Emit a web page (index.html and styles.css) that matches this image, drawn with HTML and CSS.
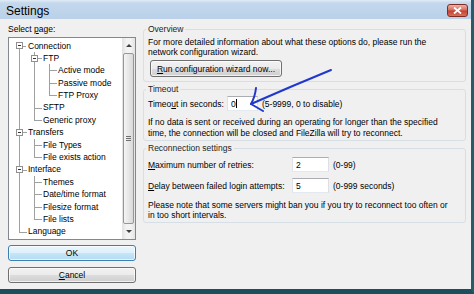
FILE: index.html
```html
<!DOCTYPE html>
<html lang="en">
<head>
    <meta charset="UTF-8">
    <title>Settings</title>
    <link rel="stylesheet" href="styles.css">
</head>
<body>
    <div class="window">
        <div class="titlebar">
            <span class="title">Settings</span>
            <span class="close">
                <svg width="9" height="7" viewBox="0 0 9 7"><path d="M1 0.5 L8 6.5 M8 0.5 L1 6.5" stroke="#fff" stroke-width="1.8"/></svg>
            </span>
        </div>

        <div class="content">
            <div class="sidebar">
                <div class="page-label">Select <u>p</u>age:</div>
                <div class="tree">
                    <ul class="tree-list">
                        <li><span class="exp"></span><div class="node">Connection</div>
                            <ul>
                                <li><span class="exp"></span><div class="node">FTP</div>
                                    <ul>
                                        <li><div class="node">Active mode</div></li>
                                        <li><div class="node">Passive mode</div></li>
                                        <li><div class="node">FTP Proxy</div></li>
                                    </ul>
                                </li>
                                <li><div class="node">SFTP</div></li>
                                <li><div class="node">Generic proxy</div></li>
                            </ul>
                        </li>
                        <li><span class="exp"></span><div class="node">Transfers</div>
                            <ul>
                                <li><div class="node">File Types</div></li>
                                <li><div class="node">File exists action</div></li>
                            </ul>
                        </li>
                        <li><span class="exp"></span><div class="node">Interface</div>
                            <ul>
                                <li><div class="node">Themes</div></li>
                                <li><div class="node">Date/time format</div></li>
                                <li><div class="node">Filesize format</div></li>
                                <li><div class="node">File lists</div></li>
                            </ul>
                        </li>
                        <li><div class="node">Language</div></li>
                    </ul>
                    <div class="scrollbar">
                        <div class="sb-btn up"></div>
                        <div class="sb-thumb"><span class="grip"></span></div>
                        <div class="sb-btn down"></div>
                    </div>
                </div>
                <button class="btn default ok">OK</button>
                <button class="btn cancel"><u>C</u>ancel</button>
            </div>

            <div class="panels">
                <fieldset class="group overview">
                    <legend>Overview</legend>
                    <p>For more detailed information about what these options do, please run the<br>network configuration wizard.</p>
                    <button class="btn wizard"><u>R</u>un configuration wizard now...</button>
                </fieldset>

                <fieldset class="group timeout">
                    <legend>Timeout</legend>
                    <div class="row">
                        <label class="timeout-label">Timeo<u>u</u>t in seconds:</label>
                        <span class="field-wrap">
                            <input class="field short" type="text" value="0">
                            <span class="caret"></span>
                        </span>
                        <span class="hint">(5-9999, 0 to disable)</span>
                    </div>
                    <p>If no data is sent or received during an operating for longer than the specified<br>time, the connection will be closed and FileZilla will try to reconnect.</p>
                </fieldset>

                <fieldset class="group reconnect">
                    <legend>Reconnection settings</legend>
                    <div class="row">
                        <label class="wide-label"><u>M</u>aximum number of retries:</label>
                        <input class="field" type="text" value="2">
                        <span class="hint">(0-99)</span>
                    </div>
                    <div class="row second">
                        <label class="wide-label"><u>D</u>elay between failed login attempts:</label>
                        <input class="field" type="text" value="5">
                        <span class="hint">(0-999 seconds)</span>
                    </div>
                    <p>Please note that some servers might ban you if you try to reconnect too often or<br>in too short intervals.</p>
                </fieldset>
            </div>
        </div>

        <!-- hand drawn annotation -->
        <svg class="arrow" width="474" height="294" viewBox="0 0 474 294">
            <path d="M331 70 Q292 86 251 104" fill="none" stroke="#2038cc" stroke-width="2" stroke-linecap="round"/>
            <path d="M256 88 Q255 97 251 104 L263 111" fill="none" stroke="#2038cc" stroke-width="2" stroke-linecap="round" stroke-linejoin="round"/>
        </svg>
    </div>
</body>
</html>
```

FILE: styles.css
```css
* {
    box-sizing: border-box;
}

body {
    margin: 0;
    font-family: "Liberation Sans", Arial, sans-serif;
    font-size: 8.5px;
    color: #000;
    background: #1b4f5b;
}

.window {
    position: relative;
    width: 474px;
    height: 294px;
    display: flex;
    flex-direction: column;
    background: #f0f0f0;
    border-right: 3px solid #255e6b;
    border-bottom: 5px solid #1b4f5b;
}

/* title bar */
.titlebar {
    flex: none;
    height: 19px;
    display: flex;
    align-items: center;
    justify-content: space-between;
    padding: 0 3px 0 6px;
    background: linear-gradient(#e2ecf7, #c4d8ed 3px, #b9d0e8);
}

.title {
    font-size: 12px;
    line-height: 1;
    padding-top: 2px;
}

.close {
    width: 21px;
    height: 13px;
    margin-top: 1px;
    display: flex;
    align-items: center;
    justify-content: center;
    border: 1px solid #7d2d24;
    border-radius: 3px;
    background: linear-gradient(#ecb3a6, #d66f5f 45%, #c4412f 55%, #d8705a);
}

.close svg {
    display: block;
}

/* main area */
.content {
    flex: 1;
    display: flex;
    gap: 7px;
    padding: 5px 5px 0 8px;
}

.sidebar {
    width: 128px;
    flex: none;
    display: flex;
    flex-direction: column;
}

.page-label {
    line-height: 11px;
}

.tree {
    margin-top: 2px;
    height: 203px;
    display: flex;
    background: #fff;
    border: 1px solid #828790;
}

.tree ul {
    list-style: none;
    margin: 0;
    padding: 0 0 0 6px;
}

.tree-list {
    flex: 1;
    overflow: hidden;
    padding: 1.5px 0 0 10px !important;
}

.tree li {
    position: relative;
    padding-left: 9px;
}

.tree li::before {
    content: "";
    position: absolute;
    left: 0;
    top: 0;
    width: 7px;
    height: 6.2px;
    border-left: 1px solid #a0a0a0;
    border-bottom: 1px solid #a0a0a0;
}

.tree li::after {
    content: "";
    position: absolute;
    left: 0;
    top: 6.2px;
    bottom: 0;
    border-left: 1px solid #a0a0a0;
}

.tree li:last-child::after {
    display: none;
}

.tree-list > li:first-child::before {
    border-left: 0;
}

.node {
    height: 12.4px;
    line-height: 12.4px;
    white-space: nowrap;
}

.exp {
    position: absolute;
    left: -3px;
    top: 2.7px;
    width: 7px;
    height: 7px;
    z-index: 1;
    background: #fff;
    border: 1px solid #909090;
}

.exp::after {
    content: "";
    position: absolute;
    left: 1px;
    top: 2px;
    width: 3px;
    height: 1px;
    background: #333;
}

.scrollbar {
    width: 13px;
    flex: none;
    display: flex;
    flex-direction: column;
    background: linear-gradient(to right, #e2e2e2, #f3f3f3 35%, #f3f3f3 65%, #e4e4e4);
}

.sb-btn {
    height: 15px;
    flex: none;
    display: flex;
    align-items: center;
    justify-content: center;
}

.sb-btn::after {
    content: "";
    border-left: 3px solid transparent;
    border-right: 3px solid transparent;
}

.sb-btn.up::after {
    border-bottom: 3px solid #404040;
}

.sb-btn.down::after {
    border-top: 3px solid #404040;
}

.sb-thumb {
    flex: 1;
    margin: 0 1px;
    display: flex;
    align-items: center;
    justify-content: center;
    border: 1px solid #979797;
    border-radius: 2px;
    background: linear-gradient(to right, #f5f5f5, #e7e7e7 50%, #d9d9d9);
}

.grip {
    width: 5px;
    height: 5px;
    background: linear-gradient(#6f6f6f 1px, transparent 1px, transparent 2px, #6f6f6f 2px, #6f6f6f 3px, transparent 3px, transparent 4px, #6f6f6f 4px);
}

/* buttons */
.btn {
    font: inherit;
    color: #000;
    height: 16px;
    padding: 0;
    line-height: 14px;
    border: 1px solid #707070;
    border-radius: 3px;
    background: linear-gradient(#f2f2f2, #ebebeb 50%, #dddddd 50%, #cfcfcf);
    box-shadow: inset 0 0 0 1px rgba(255, 255, 255, 0.7);
}

.btn.default {
    border-color: #3c7fb1;
    background: linear-gradient(#eaf6fd, #dcf0fb 50%, #c6e6f8 50%, #b3daf2);
}

.ok {
    margin-top: 5px;
}

.cancel {
    margin-top: 6px;
}

/* right side groups */
.panels {
    width: 323px;
    display: flex;
    flex-direction: column;
    gap: 2px;
}

.group {
    margin: 0;
    min-width: 0;
    padding: 0 4px;
    border: 1px solid #d5dfe5;
    border-radius: 3px;
}

.group legend {
    padding: 0 2px;
    margin-left: -2px;
    line-height: 11px;
    color: #1e1e1e;
}

.group p {
    margin: 0;
    line-height: 10.5px;
}

.overview p {
    margin-top: 1.5px;
}

.wizard {
    width: 132px;
    height: 17px;
    margin: 2.5px 0 4px 2px;
}

.row {
    display: flex;
    align-items: center;
    height: 15px;
}

.timeout .row {
    margin-top: 1px;
}

.timeout p {
    line-height: 11px;
    margin: 5.5px 0 1.5px;
}

.reconnect .row {
    margin-top: 3px;
}

.reconnect .row.second {
    margin-top: 6px;
}

.reconnect p {
    margin: 6.5px 0 1px;
}

.timeout-label {
    width: 79px;
}

.wide-label {
    width: 144px;
}

.field {
    font: inherit;
    width: 37px;
    height: 15px;
    padding: 0 3px;
    background: #fff;
    border: 1px solid;
    border-color: #abadb3 #dbdfe6 #e3e9ef #e2e3ea;
    outline: none;
}

.field.short {
    width: 31px;
}

.field-wrap {
    position: relative;
    display: flex;
}

.caret {
    position: absolute;
    left: 8.5px;
    top: 3px;
    width: 1px;
    height: 9px;
    background: #000;
}

.hint {
    margin-left: 4px;
}

.arrow {
    position: absolute;
    left: 0;
    top: 0;
    pointer-events: none;
}
```
